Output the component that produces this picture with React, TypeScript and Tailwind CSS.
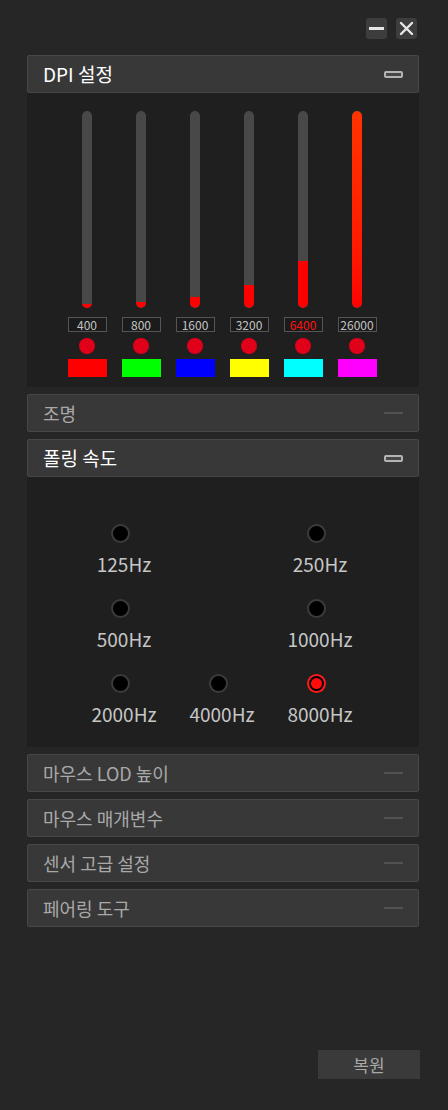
const font = { fontFamily: '"Noto Sans CJK KR", "Noto Sans", sans-serif' };

const dpis = [
  { value: "400", fill: 4, swatch: "bg-[#ff0000]", active: false },
  { value: "800", fill: 6, swatch: "bg-[#00ff00]", active: false },
  { value: "1600", fill: 11, swatch: "bg-[#0000ff]", active: false },
  { value: "3200", fill: 23, swatch: "bg-[#ffff00]", active: false },
  { value: "6400", fill: 47, swatch: "bg-[#00ffff]", active: true },
  { value: "26000", fill: 197, swatch: "bg-[#ff00ff]", active: false },
];

const rates = [
  ["125Hz", "", "250Hz"],
  ["500Hz", "", "1000Hz"],
  ["2000Hz", "4000Hz", "8000Hz"],
];

function ExpandedIcon() {
  return <div className="w-[19px] h-[7px] rounded-[2px] border-2 border-[#b4b4b4] bg-[#474747]" />;
}

function CollapsedIcon() {
  return <div className="w-[19px] h-[2px] bg-[#525252]" />;
}

function Header({ title, open }: { title: string; open?: boolean }) {
  return (
    <div className="h-[38px] flex items-center justify-between pl-[15px] pr-[15px] bg-[#383838] border border-[#474747] rounded-[2px]">
      <span className={open ? "text-[19px] text-white" : "text-[18px] text-[#a9a9a9]"}>{title}</span>
      {open ? <ExpandedIcon /> : <CollapsedIcon />}
    </div>
  );
}

function Radio({ selected }: { selected?: boolean }) {
  if (selected) {
    return (
      <div className="w-[19px] h-[19px] rounded-full bg-[#ff1a1a] flex items-center justify-center">
        <div className="w-[15px] h-[15px] rounded-full bg-black flex items-center justify-center">
          <div className="w-[11px] h-[11px] rounded-full bg-[#ff0d0d]" />
        </div>
      </div>
    );
  }
  return <div className="w-[19px] h-[19px] rounded-full bg-black border-2 border-[#3b3b3b]" />;
}

export default function App() {
  return (
    <div className="min-h-[1110px] bg-[#262626] flex flex-col" style={font}>
      <div className="flex justify-end gap-[9px] pt-[18px] pr-[31px]">
        <div className="w-[21px] h-[21px] rounded-[3px] bg-[#3d3d3d] flex items-center justify-center">
          <div className="w-[15px] h-[3px] bg-[#e6e6e6]" />
        </div>
        <div className="w-[21px] h-[21px] rounded-[3px] bg-[#3d3d3d] flex items-center justify-center">
          <svg width="15" height="15" viewBox="0 0 15 15">
            <path d="M2 2 L13 13 M13 2 L2 13" stroke="#e6e6e6" strokeWidth="2.4" strokeLinecap="round" />
          </svg>
        </div>
      </div>

      <div className="ml-[27px] w-[392px] mt-[16px] flex flex-col">
        <Header title="DPI 설정" open />
        <div className="bg-[#1f1f1f] flex pl-[33px] pt-[18px] pb-[10px]">
          {dpis.map((d) => (
            <div key={d.value} className="w-[54px] flex flex-col items-center">
              <div className="w-[10px] h-[197px] rounded-full bg-[#484848] flex flex-col justify-end overflow-hidden">
                <div
                  className={d.fill > 100 ? "w-full rounded-full bg-gradient-to-b from-[#ff3300] to-[#ff0000]" : "w-full rounded-b-full rounded-t-[1px] bg-[#ff0000]"}
                  style={{ height: d.fill }}
                />
              </div>
              <div
                className={`mt-[9px] w-[39px] h-[15px] border border-[#555555] bg-[#1b1b1b] flex items-center justify-center text-[12px] leading-none ${d.active ? "text-[#ff1010]" : "text-[#c4c4c4]"}`}
              >
                {d.value}
              </div>
              <div className="mt-[6px] w-[16px] h-[16px] rounded-full bg-[#e0001a]" />
              <div className={`mt-[5px] w-[39px] h-[18px] ${d.swatch}`} />
            </div>
          ))}
        </div>

        <div className="mt-[7px]">
          <Header title="조명" />
        </div>

        <div className="mt-[7px]">
          <Header title="폴링 속도" open />
        </div>
        <div className="bg-[#1f1f1f] pt-[47px] pb-[21px] pl-[48px] flex flex-col gap-[23px]">
          {rates.map((row, i) => (
            <div key={i} className="flex">
              {row.map((r, j) => (
                <div key={j} className="w-[98px] flex flex-col items-center">
                  {r && (
                    <>
                      <div className="mr-[8px]">
                        <Radio selected={r === "8000Hz"} />
                      </div>
                      <span className="mt-[9px] text-[19px] leading-[24px] text-[#c6c6c6]">{r}</span>
                    </>
                  )}
                </div>
              ))}
            </div>
          ))}
        </div>

        <div className="mt-[7px] flex flex-col gap-[7px]">
          <Header title="마우스 LOD 높이" />
          <Header title="마우스 매개변수" />
          <Header title="센서 고급 설정" />
          <Header title="페어링 도구" />
        </div>
      </div>

      <div className="flex justify-end pr-[28px] mt-[123px]">
        <div className="w-[102px] h-[29px] bg-[#3a3a3a] flex items-center justify-center text-[17px] text-[#a9a9a9]">
          복원
        </div>
      </div>
    </div>
  );
}
